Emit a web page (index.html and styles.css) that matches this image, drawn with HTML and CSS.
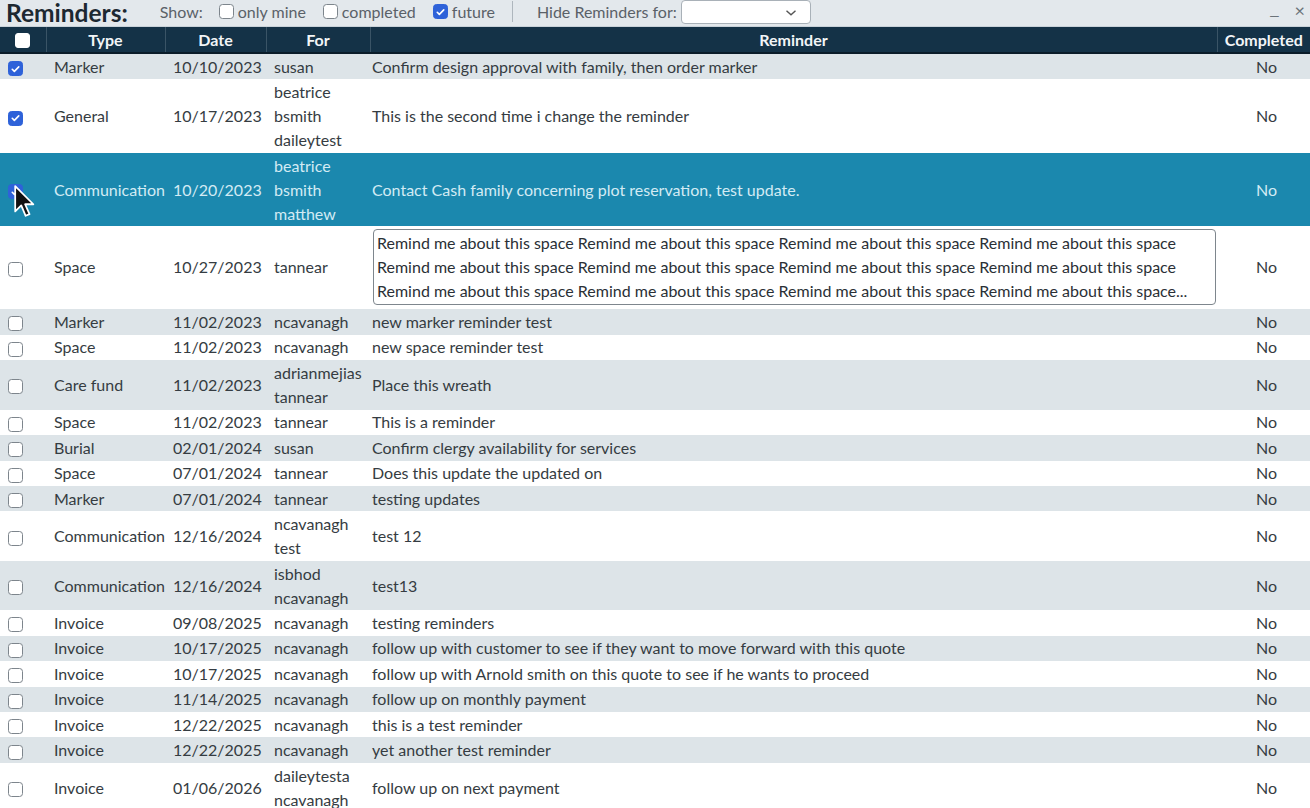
FILE: index.html
```html
<!DOCTYPE html>
<html>
<head>
<meta charset="utf-8">
<link rel="stylesheet" href="styles.css">
</head>
<body>
<div class="app">
  <div class="toolbar">
    <div class="title">Reminders:</div>
    <div class="show">Show:</div>
    <label class="opt"><span class="cb"></span>only mine</label>
    <label class="opt"><span class="cb"></span>completed</label>
    <label class="opt"><span class="cb on"><svg viewBox="0 0 16 16"><path d="M4 8.3l2.6 2.6L12 5.4" fill="none" stroke="#fff" stroke-width="2" stroke-linecap="round" stroke-linejoin="round"/></svg></span>future</label>
    <div class="divider"></div>
    <div class="hide">Hide Reminders for:</div>
    <div class="select"><svg viewBox="0 0 12 8" class="chev"><path d="M1.5 1.8l4.5 4 4.5-4" fill="none" stroke="#555" stroke-width="1.4"/></svg></div>
    <div class="spacer"></div>
    <div class="winbtn min">—</div>
    <div class="winbtn close">×</div>
  </div>
  <table class="grid">
    <colgroup>
      <col class="c0"><col class="c1"><col class="c2"><col class="c3"><col class="c4"><col class="c5">
    </colgroup>
    <thead>
      <tr>
        <th class="hcb"><span class="cb white"></span></th>
        <th>Type</th><th>Date</th><th>For</th><th>Reminder</th><th class="last">Completed</th>
      </tr>
    </thead>
    <tbody>
      <tr class="odd"><td><span class="cb on"><svg viewBox="0 0 16 16"><path d="M4 8.3l2.6 2.6L12 5.4" fill="none" stroke="#fff" stroke-width="2" stroke-linecap="round" stroke-linejoin="round"/></svg></span></td><td>Marker</td><td>10/10/2023</td><td>susan</td><td>Confirm design approval with family, then order marker</td><td class="done">No</td></tr>
      <tr><td><span class="cb on"><svg viewBox="0 0 16 16"><path d="M4 8.3l2.6 2.6L12 5.4" fill="none" stroke="#fff" stroke-width="2" stroke-linecap="round" stroke-linejoin="round"/></svg></span></td><td>General</td><td>10/17/2023</td><td>beatrice<br>bsmith<br>daileytest</td><td>This is the second time i change the reminder</td><td class="done">No</td></tr>
      <tr class="sel"><td class="curcell"><span class="cb on selcb"><svg viewBox="0 0 16 16"><path d="M4 8.3l2.6 2.6L12 5.4" fill="none" stroke="#fff" stroke-width="2" stroke-linecap="round" stroke-linejoin="round"/></svg></span><svg class="cursor" viewBox="0 0 20 30"><path d="M2 1 L2 24 L7.5 18.5 L11.5 28 L15 26.5 L11 17.5 L18.5 17.5 Z" fill="#111" stroke="#fff" stroke-width="1.6" stroke-linejoin="round"/></svg></td><td>Communication</td><td>10/20/2023</td><td>beatrice<br>bsmith<br>matthew</td><td>Contact Cash family concerning plot reservation, test update.</td><td class="done">No</td></tr>
      <tr class="tarow"><td><span class="cb"></span></td><td>Space</td><td>10/27/2023</td><td>tannear</td><td class="tacell"><div class="textarea">Remind me about this space Remind me about this space Remind me about this space Remind me about this space<br>Remind me about this space Remind me about this space Remind me about this space Remind me about this space<br>Remind me about this space Remind me about this space Remind me about this space Remind me about this space...</div></td><td class="done">No</td></tr>
      <tr class="odd"><td><span class="cb"></span></td><td>Marker</td><td>11/02/2023</td><td>ncavanagh</td><td>new marker reminder test</td><td class="done">No</td></tr>
      <tr><td><span class="cb"></span></td><td>Space</td><td>11/02/2023</td><td>ncavanagh</td><td>new space reminder test</td><td class="done">No</td></tr>
      <tr class="odd"><td><span class="cb"></span></td><td>Care fund</td><td>11/02/2023</td><td>adrianmejias<br>tannear</td><td>Place this wreath</td><td class="done">No</td></tr>
      <tr><td><span class="cb"></span></td><td>Space</td><td>11/02/2023</td><td>tannear</td><td>This is a reminder</td><td class="done">No</td></tr>
      <tr class="odd"><td><span class="cb"></span></td><td>Burial</td><td>02/01/2024</td><td>susan</td><td>Confirm clergy availability for services</td><td class="done">No</td></tr>
      <tr><td><span class="cb"></span></td><td>Space</td><td>07/01/2024</td><td>tannear</td><td>Does this update the updated on</td><td class="done">No</td></tr>
      <tr class="odd"><td><span class="cb"></span></td><td>Marker</td><td>07/01/2024</td><td>tannear</td><td>testing updates</td><td class="done">No</td></tr>
      <tr><td><span class="cb"></span></td><td>Communication</td><td>12/16/2024</td><td>ncavanagh<br>test</td><td>test 12</td><td class="done">No</td></tr>
      <tr class="odd"><td><span class="cb"></span></td><td>Communication</td><td>12/16/2024</td><td>isbhod<br>ncavanagh</td><td>test13</td><td class="done">No</td></tr>
      <tr><td><span class="cb"></span></td><td>Invoice</td><td>09/08/2025</td><td>ncavanagh</td><td>testing reminders</td><td class="done">No</td></tr>
      <tr class="odd"><td><span class="cb"></span></td><td>Invoice</td><td>10/17/2025</td><td>ncavanagh</td><td>follow up with customer to see if they want to move forward with this quote</td><td class="done">No</td></tr>
      <tr><td><span class="cb"></span></td><td>Invoice</td><td>10/17/2025</td><td>ncavanagh</td><td>follow up with Arnold smith on this quote to see if he wants to proceed</td><td class="done">No</td></tr>
      <tr class="odd"><td><span class="cb"></span></td><td>Invoice</td><td>11/14/2025</td><td>ncavanagh</td><td>follow up on monthly payment</td><td class="done">No</td></tr>
      <tr><td><span class="cb"></span></td><td>Invoice</td><td>12/22/2025</td><td>ncavanagh</td><td>this is a test reminder</td><td class="done">No</td></tr>
      <tr class="odd"><td><span class="cb"></span></td><td>Invoice</td><td>12/22/2025</td><td>ncavanagh</td><td>yet another test reminder</td><td class="done">No</td></tr>
      <tr><td><span class="cb"></span></td><td>Invoice</td><td>01/06/2026</td><td>daileytesta<br>ncavanagh</td><td>follow up on next payment</td><td class="done">No</td></tr>
    </tbody>
  </table>
</div>
</body>
</html>
```

FILE: styles.css
```css
* { box-sizing: border-box; }
html, body { margin: 0; padding: 0; }
body {
  width: 1310px;
  height: 808px;
  overflow: hidden;
  background: #ffffff;
  font-family: Lato, "Open Sans", sans-serif;
  color: #333a40;
}
.app { width: 1310px; }

.toolbar {
  height: 27px;
  background: #e3e8ec;
  display: flex;
  align-items: center;
  padding-left: 6px;
  border-bottom: 1px solid #c9d2d9;
}
.title {
  font-size: 24.5px;
  font-weight: 700;
  color: #1d2831;
  margin-right: 32px;
  line-height: 25px;
  margin-top: -1px;
}
.show { font-size: 16px; color: #5a6168; margin-right: 16px; margin-top: -3px; }
.opt {
  display: flex;
  align-items: center;
  font-size: 16px;
  color: #5a6168;
  margin-right: 17px;
  margin-top: -3px;
}
.opt .cb { margin-right: 4px; }
.divider { width: 1px; height: 21px; background: #aeb6bd; margin: -3px 24px 0 0; }
.hide { font-size: 16px; color: #5a6168; margin-right: 4px; margin-top: -3px; }
.select {
  width: 130px;
  height: 24px;
  margin-top: -3px;
  background: #fff;
  border: 1px solid #a9b1b8;
  border-radius: 4px;
  position: relative;
}
.chev { position: absolute; right: 13px; top: 8px; width: 12px; height: 8px; }
.spacer { flex: 1; }
.winbtn { color: #6b7379; }
.min { margin-right: 15px; font-size: 13px; margin-top: 6px; }
.close { margin-right: 5px; font-size: 18px; margin-top: -6px; }

.cb {
  display: inline-flex;
  align-items: center;
  justify-content: center;
  width: 15px;
  height: 15px;
  border: 1.5px solid #7d858c;
  border-radius: 3.5px;
  background: #fff;
  vertical-align: middle;
}
.cb svg { width: 14px; height: 14px; }
.cb.on { background: #2e62d9; border-color: #2e62d9; }
.cb.white { border-color: #fff; width: 15px; height: 15px; border-radius: 3px; }

.grid {
  width: 1310px;
  border-collapse: collapse;
  table-layout: fixed;
  font-size: 16px;
}
.c0 { width: 46px; }
.c1 { width: 119px; }
.c2 { width: 101px; }
.c3 { width: 104px; }
.c4 { width: 847px; }
.c5 { width: 93px; }

thead th {
  background: #143247;
  color: #f2f5f7;
  font-weight: 700;
  height: 26px;
  padding: 0;
  text-align: center;
  border-left: 1px solid #3a5466;
  border-bottom: 2px solid #0a1c29;
  line-height: 23px;
}
thead th:first-child { border-left: none; }
th.hcb .cb { margin-top: -2px; }

tbody td {
  padding: 0.72px 8px 0.72px 8px;
  line-height: 24px;
  vertical-align: middle;
  white-space: nowrap;
  overflow: hidden;
  color: #353c42;
}
tbody td:first-child { padding-left: 8px; padding-right: 0; }
tbody td:nth-child(4) { padding-left: 8px; padding-right: 0; }
tbody td:nth-child(5) { padding-left: 2px; }
tbody td.done { text-align: center; padding-left: 6px; padding-right: 0; }
tbody tr { background: #ffffff; }
tbody tr.odd { background: #dde4e8; }
tbody tr.sel { background: #1b88ae; }
tbody tr.sel td { color: #d3ebf4; }
.selcb { border-color: #d8eaf3; background: #1f5fc9; }

.curcell { position: relative; overflow: visible; }
.cursor {
  position: absolute;
  left: 13px;
  top: 32px;
  width: 22px;
  height: 33px;
}

.tarow td { padding-top: 3px; padding-bottom: 4px; }
.tarow td.tacell { padding-left: 3px; padding-right: 1px; }
.textarea {
  border: 1px solid #7e868d;
  border-radius: 4px;
  padding: 1px 4px 1px 3px;
  line-height: 24px;
  background: #fff;
  color: #2a3036;
  overflow: hidden;
}
```
